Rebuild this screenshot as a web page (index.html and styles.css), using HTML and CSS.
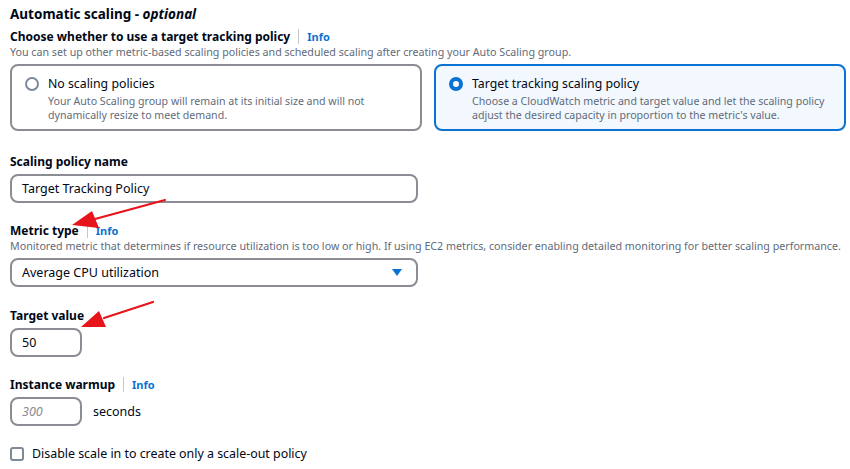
FILE: index.html
```html
<!DOCTYPE html>
<html>
<head>
<meta charset="utf-8">
<link rel="stylesheet" href="styles.css">
</head>
<body>
<div class="page">
  <h2 class="title">Automatic scaling - <em>optional</em></h2>
  <div class="label-row"><span class="label">Choose whether to use a target tracking policy</span><span class="sep"></span><a class="info">Info</a></div>
  <div class="desc">You can set up other metric-based scaling policies and scheduled scaling after creating your Auto Scaling group.</div>
  <div class="cards">
    <div class="card">
      <span class="radio"></span>
      <div class="card-body">
        <div class="card-title">No scaling policies</div>
        <div class="card-desc">Your Auto Scaling group will remain at its initial size and will not dynamically resize to meet demand.</div>
      </div>
    </div>
    <div class="card selected">
      <span class="radio on"></span>
      <div class="card-body">
        <div class="card-title">Target tracking scaling policy</div>
        <div class="card-desc">Choose a CloudWatch metric and target value and let the scaling policy adjust the desired capacity in proportion to the metric's value.</div>
      </div>
    </div>
  </div>

  <div class="field f-name">
    <div class="label-row"><span class="label">Scaling policy name</span></div>
    <div class="input wide">Target Tracking Policy</div>
  </div>

  <div class="field f-metric">
    <div class="label-row"><span class="label">Metric type</span><span class="sep"></span><a class="info">Info</a></div>
    <div class="desc">Monitored metric that determines if resource utilization is too low or high. If using EC2 metrics, consider enabling detailed monitoring for better scaling performance.</div>
    <div class="input wide select">Average CPU utilization<svg class="caret" width="10" height="8" viewBox="0 0 10 8"><path d="M0 0H10L5 7Z" fill="#0972d3"/></svg></div>
  </div>

  <div class="field f-target">
    <div class="label-row"><span class="label">Target value</span></div>
    <div class="input small">50</div>
  </div>

  <div class="field f-warm">
    <div class="label-row"><span class="label">Instance warmup</span><span class="sep"></span><a class="info">Info</a></div>
    <div class="inline">
      <div class="input small placeholder">300</div>
      <span class="unit">seconds</span>
    </div>
  </div>

  <div class="check-row"><span class="checkbox"></span><span class="check-label">Disable scale in to create only a scale-out policy</span></div>
</div>
<svg class="arrows" width="850" height="469" viewBox="0 0 850 469">
  <line x1="165" y1="200" x2="95" y2="219" stroke="#e8141b" stroke-width="2.2" stroke-linecap="round"/>
  <path d="M72 225 L92 211 L99 228 Z" fill="#e8141b"/>
  <line x1="153" y1="302" x2="104" y2="318" stroke="#e8141b" stroke-width="2.2" stroke-linecap="round"/>
  <path d="M81 327 L99 311 L106 327 Z" fill="#e8141b"/>
</svg>
</body>
</html>
```

FILE: styles.css
```css
html, body {
  margin: 0;
  padding: 0;
  background: #ffffff;
}
body {
  font-family: "Noto Sans", "Open Sans", sans-serif;
  color: #000716;
  position: relative;
  width: 850px;
  height: 469px;
  overflow: hidden;
}
.page {
  padding: 4px 0 0 10px;
}
.title {
  margin: 0;
  font-size: 13.5px;
  font-weight: 700;
  line-height: 20px;
}
.title em {
  font-style: italic;
}
.label-row {
  display: flex;
  align-items: center;
  height: 18px;
  margin-top: 3px;
}
.label {
  font-size: 12px;
  font-weight: 700;
  color: #000716;
}
.sep {
  width: 1px;
  height: 15px;
  background: #c6c6cd;
  margin: 0 8px 0 8px;
}
.info {
  font-size: 11px;
  font-weight: 700;
  color: #0972d3;
}
.desc {
  font-size: 10.7px;
  line-height: 15px;
  color: #5f6b7a;
  white-space: nowrap;
}
.cards {
  display: flex;
  gap: 12px;
  margin-top: 4px;
}
.card {
  width: 412px;
  height: 67px;
  box-sizing: border-box;
  border: 2px solid #8c8c94;
  border-radius: 8px;
  display: flex;
  gap: 9px;
  padding: 10px 12px 0 11px;
}
.card.selected {
  border-color: #0972d3;
  background: #f2f8fd;
}
.radio {
  flex: none;
  width: 14px;
  height: 14px;
  box-sizing: border-box;
  border: 2px solid #7d8998;
  border-radius: 50%;
  margin-top: 1px;
  margin-left: 2px;
  background: #fff;
}
.radio.on {
  border: 4px solid #0972d3;
}
.card-title {
  font-size: 12.3px;
  line-height: 16px;
}
.card-desc {
  font-size: 10.6px;
  line-height: 14px;
  color: #5f6b7a;
  margin-top: 2px;
}
.f-name { margin-top: 21px; }
.f-metric { margin-top: 18px; }
.f-target { margin-top: 19px; }
.f-warm { margin-top: 18px; }
.input {
  box-sizing: border-box;
  height: 29px;
  border: 2px solid #8c8c94;
  border-radius: 8px;
  font-size: 12.5px;
  display: flex;
  align-items: center;
  padding: 0 10px;
  margin-top: 4px;
  background: #fff;
}
.input.wide { width: 408px; }
.input.small { width: 72px; }
.select {
  justify-content: space-between;
  padding-right: 14px;
}
.f-metric .input { margin-top: 4px; }
.placeholder {
  font-style: italic;
  color: #8c8c94;
}
.inline {
  display: flex;
  align-items: center;
  gap: 11px;
}
.unit {
  font-size: 12.5px;
  margin-top: 4px;
}
.check-row {
  display: flex;
  align-items: center;
  gap: 8px;
  margin-top: 19px;
}
.checkbox {
  width: 14px;
  height: 14px;
  box-sizing: border-box;
  border: 2px solid #7d8998;
  border-radius: 3px;
}
.check-label {
  font-size: 12.4px;
}
.arrows {
  position: absolute;
  left: 0;
  top: 0;
  pointer-events: none;
}
```
